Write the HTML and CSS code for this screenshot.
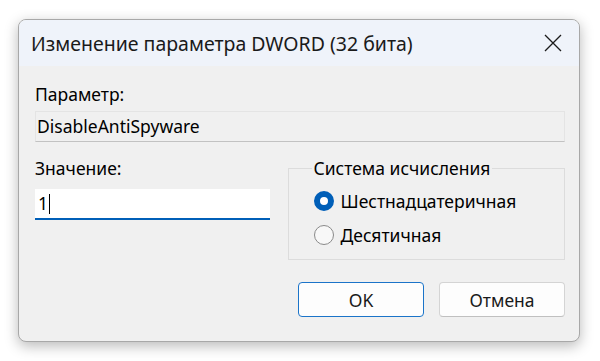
FILE: index.html
```html
<!DOCTYPE html>
<html lang="ru">
<head>
<meta charset="utf-8">
<link rel="stylesheet" href="styles.css">
</head>
<body>
<div class="dialog">
  <div class="titlebar">
    <span class="title">Изменение параметра DWORD (32 бита)</span>
    <span class="close">
      <svg width="18" height="18" viewBox="0 0 18 18"><path d="M1 1L17 17M17 1L1 17" stroke="#1b1b1b" stroke-width="1.3" fill="none"/></svg>
    </span>
  </div>
  <div class="content">
    <div class="label">Параметр:</div>
    <div class="field readonly">DisableAntiSpyware</div>
    <div class="row">
      <div class="value-col">
        <div class="label">Значение:</div>
        <div class="field edit"><span>1</span><span class="caret"></span></div>
      </div>
      <fieldset class="group">
        <legend>Система исчисления</legend>
        <div class="radio"><span class="dot checked"></span><span>Шестнадцатеричная</span></div>
        <div class="radio"><span class="dot"></span><span>Десятичная</span></div>
      </fieldset>
    </div>
    <div class="buttons">
      <button class="btn primary">OK</button>
      <button class="btn">Отмена</button>
    </div>
  </div>
</div>
</body>
</html>
```
FILE: styles.css
```css
html, body {
  margin: 0;
  padding: 0;
  background: #ffffff;
}
body {
  width: 600px;
  height: 361px;
  overflow: hidden;
  font-family: "Noto Sans", "Open Sans", sans-serif;
  color: #000;
}
.dialog {
  margin: 19px 0 0 18px;
  width: 562px;
  height: 323px;
  box-sizing: border-box;
  border: 1px solid #a8a8a8;
  border-radius: 8px;
  background: #f0f0f0;
  box-shadow: 0 4px 14px rgba(0,0,0,0.28);
  overflow: hidden;
  display: flex;
  flex-direction: column;
}
.titlebar {
  height: 46px;
  background: #eff3fa;
  display: flex;
  align-items: center;
  justify-content: space-between;
  padding: 0 17px 0 12px;
  flex-shrink: 0;
}
.title {
  font-size: 19.5px;
  color: #1a1a1a;
}
.close {
  display: flex;
  width: 18px;
  height: 18px;
}
.content {
  padding: 18px 14px 0 16px;
  font-size: 17.5px;
}
.label {
  height: 21px;
  line-height: 21px;
}
.field {
  box-sizing: border-box;
  height: 31px;
  margin-top: 6px;
  padding: 0 1px;
  line-height: 29px;
}
.readonly {
  border: 1px solid #e4e4e4;
  border-bottom-color: #c2c2c2;
  background: #f0f0f0;
}
.row {
  display: flex;
  margin-top: 16px;
  gap: 18px;
  align-items: flex-start;
}
.value-col {
  width: 235px;
}
.value-col .field {
  margin-top: 10px;
  padding-left: 3px;
}
.edit {
  background: #ffffff;
  border-bottom: 2px solid #005fb8;
  display: flex;
  align-items: center;
}
.caret {
  display: inline-block;
  width: 1px;
  height: 20px;
  background: #000;
  margin-left: 1px;
}
.group {
  margin: 0;
  width: 278px;
  height: 102px;
  box-sizing: border-box;
  border: 1px solid #dcdcdc;
  padding: 5px 0 0 25px;
}
.group legend {
  padding: 0 2px;
  margin-left: -2px;
  line-height: 21px;
}
.radio {
  display: flex;
  align-items: center;
  gap: 7px;
  height: 34px;
}
.dot {
  box-sizing: border-box;
  width: 20px;
  height: 20px;
  border-radius: 50%;
  border: 1px solid #8a8a8a;
  background: #f8f8f8;
}
.dot.checked {
  border: 6px solid #005fb8;
  background: #ffffff;
}
.buttons {
  display: flex;
  justify-content: flex-end;
  gap: 15px;
  margin-top: 22px;
}
.btn {
  width: 126px;
  height: 35px;
  box-sizing: border-box;
  border: 1px solid #d4d4d4;
  border-bottom-color: #c0c0c0;
  border-radius: 4px;
  background: #fdfdfd;
  font-family: inherit;
  font-size: 17.5px;
  color: #1a1a1a;
  padding: 0;
}
.btn.primary {
  border: 1px solid #1b74c9;
}
```
